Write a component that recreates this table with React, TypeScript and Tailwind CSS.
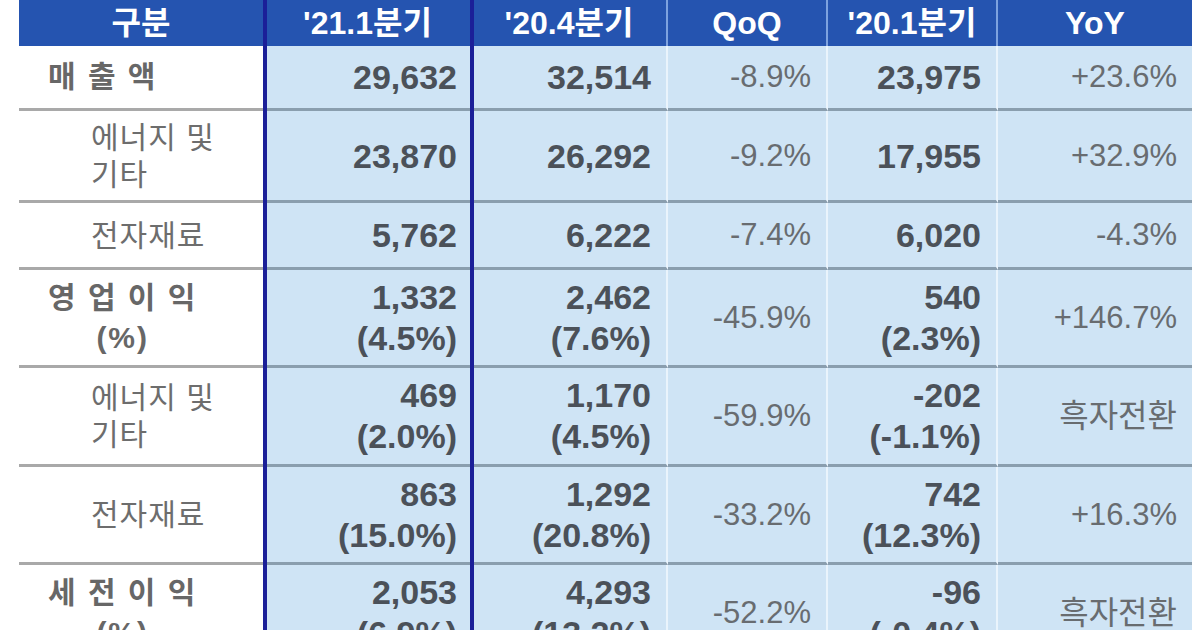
import React from "react";

type Cell = string | [string, string];
type Row = {
  label: string[];
  main: boolean;
  h: string;
  c1: Cell;
  c2: Cell;
  qoq: string;
  c4: Cell;
  yoy: string;
};

const rows: Row[] = [
  { label: ["매 출 액"], main: true, h: "h-[65px]", c1: "29,632", c2: "32,514", qoq: "-8.9%", c4: "23,975", yoy: "+23.6%" },
  { label: ["에너지 및", "기타"], main: false, h: "h-[92px]", c1: "23,870", c2: "26,292", qoq: "-9.2%", c4: "17,955", yoy: "+32.9%" },
  { label: ["전자재료"], main: false, h: "h-[67px]", c1: "5,762", c2: "6,222", qoq: "-7.4%", c4: "6,020", yoy: "-4.3%" },
  { label: ["영 업 이 익", "(%)"], main: true, h: "h-[98px]", c1: ["1,332", "(4.5%)"], c2: ["2,462", "(7.6%)"], qoq: "-45.9%", c4: ["540", "(2.3%)"], yoy: "+146.7%" },
  { label: ["에너지 및", "기타"], main: false, h: "h-[99px]", c1: ["469", "(2.0%)"], c2: ["1,170", "(4.5%)"], qoq: "-59.9%", c4: ["-202", "(-1.1%)"], yoy: "흑자전환" },
  { label: ["전자재료"], main: false, h: "h-[98px]", c1: ["863", "(15.0%)"], c2: ["1,292", "(20.8%)"], qoq: "-33.2%", c4: ["742", "(12.3%)"], yoy: "+16.3%" },
  { label: ["세 전 이 익", "(%)"], main: true, h: "h-[98px]", c1: ["2,053", "(6.9%)"], c2: ["4,293", "(13.2%)"], qoq: "-52.2%", c4: ["-96", "(-0.4%)"], yoy: "흑자전환" },
];

const headers = ["구분", "'21.1분기", "'20.4분기", "QoQ", "'20.1분기", "YoY"];

function Bold({ v }: { v: Cell }) {
  if (typeof v === "string") {
    return <div className="text-[34px] font-bold text-[#4b5159] leading-[40px]">{v}</div>;
  }
  return (
    <div className="flex flex-col items-end text-[34px] font-bold text-[#4b5159] leading-[41px]">
      <span>{v[0]}</span>
      <span>{v[1]}</span>
    </div>
  );
}

function Pct({ v }: { v: string }) {
  const korean = /[가-힣]/.test(v);
  return (
    <div className={korean ? "text-[32px] text-[#686c70] leading-[40px]" : "text-[31px] text-[#686c70] leading-[40px]"}>
      {v}
    </div>
  );
}

export default function App() {
  return (
    <div className="relative w-[1200px] h-[630px] overflow-hidden bg-white font-['Liberation_Sans','Noto_Sans_CJK_KR',sans-serif]">
      <div className="ml-[19px] w-[1173px]">
        <div className="grid grid-cols-[246px_207px_196px_160px_170px_194px] h-[46px] bg-[#2554b0] text-white font-bold text-[32px] leading-none">
          {headers.map((h, i) => (
            <div
              key={i}
              className={
                i < 5
                  ? "flex items-center justify-center border-r-2 border-[#7da2df]"
                  : "flex items-center justify-center"
              }
            >
              {h}
            </div>
          ))}
        </div>
        {rows.map((r, idx) => (
          <div key={idx} className={`grid grid-cols-[246px_207px_196px_160px_170px_194px] ${r.h}`}>
            <div className="flex items-center bg-white border-b-[3px] border-[#a9a9a9]">
              {r.main ? (
                <div className="pl-[29px] inline-flex flex-col items-center text-[30px] font-bold text-[#676767] leading-[40px] tracking-[2px] font-['Liberation_Sans','Noto_Sans_CJK_KR',sans-serif]">
                  {r.label.map((l, j) => (
                    <span key={j} className="whitespace-pre">{l}</span>
                  ))}
                </div>
              ) : (
                <div className="pl-[72px] flex flex-col text-[30px] text-[#6d6d6d] leading-[37px] tracking-[1px]">
                  {r.label.map((l, j) => (
                    <span key={j}>{l}</span>
                  ))}
                </div>
              )}
            </div>
            <div className="flex items-center justify-end pr-[15px] bg-[#cfe4f5] border-b-[3px] border-[#8a9eae]">
              <Bold v={r.c1} />
            </div>
            <div className="flex items-center justify-end pr-[15px] bg-[#cfe4f5] border-b-[3px] border-[#8a9eae] border-r-2 border-r-[#eaf4fc]">
              <Bold v={r.c2} />
            </div>
            <div className="flex items-center justify-end pr-[15px] bg-[#cfe4f5] border-b-[3px] border-[#8a9eae] border-r-2 border-r-[#eaf4fc]">
              <Pct v={r.qoq} />
            </div>
            <div className="flex items-center justify-end pr-[15px] bg-[#cfe4f5] border-b-[3px] border-[#8a9eae] border-r-2 border-r-[#eaf4fc]">
              <Bold v={r.c4} />
            </div>
            <div className="flex items-center justify-end pr-[15px] bg-[#cfe4f5] border-b-[3px] border-[#8a9eae]">
              <Pct v={r.yoy} />
            </div>
          </div>
        ))}
      </div>
      <div className="absolute left-[263px] top-0 w-[211px] h-[630px] border-x-4 border-[#1b1f98]" />
    </div>
  );
}
